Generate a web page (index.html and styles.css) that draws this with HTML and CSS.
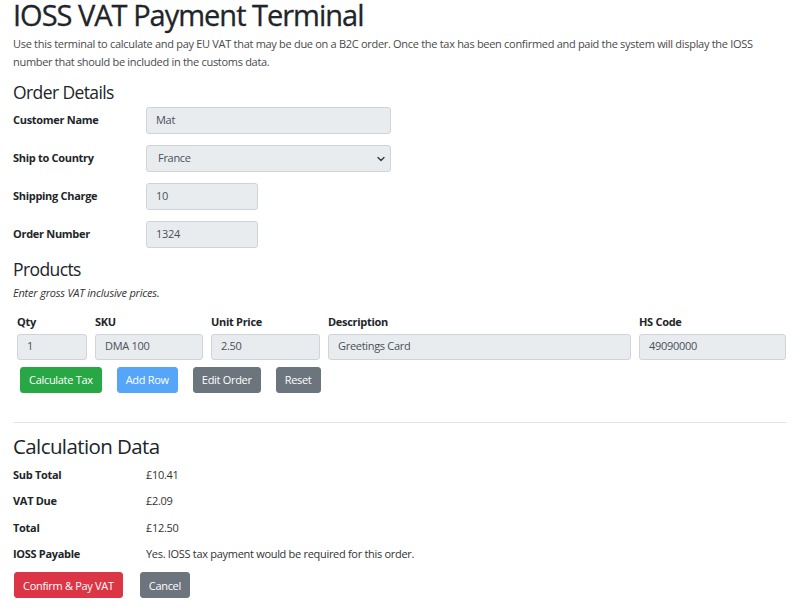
FILE: index.html
```html
<!DOCTYPE html>
<html lang="en">
<head>
<meta charset="utf-8">
<title>IOSS VAT Payment Terminal</title>
<link rel="stylesheet" href="styles.css">
</head>
<body>
<div class="page">
  <h1 class="title">IOSS VAT Payment Terminal</h1>
  <p class="intro">Use this terminal to calculate and pay EU VAT that may be due on a B2C order. Once the tax has been confirmed and paid the system will display the IOSS number that should be included in the customs data.</p>

  <h4 class="section">Order Details</h4>
  <div class="form-row">
    <label class="form-label">Customer Name</label>
    <div class="field field-wide">Mat</div>
  </div>
  <div class="form-row">
    <label class="form-label">Ship to Country</label>
    <div class="field field-wide field-select">France
      <svg class="chevron" viewBox="0 0 8 6" width="8" height="6"><path d="M1 1.5 L4 4.5 L7 1.5" fill="none" stroke="#343a40" stroke-width="1.4" stroke-linecap="round" stroke-linejoin="round"/></svg>
    </div>
  </div>
  <div class="form-row">
    <label class="form-label">Shipping Charge</label>
    <div class="field field-short">10</div>
  </div>
  <div class="form-row">
    <label class="form-label">Order Number</label>
    <div class="field field-short">1324</div>
  </div>

  <h4 class="section section-products">Products</h4>
  <p class="hint">Enter gross VAT inclusive prices.</p>

  <div class="products">
    <div class="th">Qty</div>
    <div class="th">SKU</div>
    <div class="th">Unit Price</div>
    <div class="th">Description</div>
    <div class="th">HS Code</div>
    <div class="td"><div class="field">1</div></div>
    <div class="td"><div class="field">DMA 100</div></div>
    <div class="td"><div class="field">2.50</div></div>
    <div class="td"><div class="field">Greetings Card</div></div>
    <div class="td"><div class="field">49090000</div></div>
  </div>

  <div class="actions actions-products">
    <button class="btn btn-success">Calculate Tax</button>
    <button class="btn btn-primary-disabled">Add Row</button>
    <button class="btn btn-secondary">Edit Order</button>
    <button class="btn btn-secondary">Reset</button>
  </div>

  <hr class="divider">

  <h3 class="section-lg">Calculation Data</h3>
  <div class="calc-row"><span class="calc-label">Sub Total</span><span class="calc-value">£10.41</span></div>
  <div class="calc-row"><span class="calc-label">VAT Due</span><span class="calc-value">£2.09</span></div>
  <div class="calc-row"><span class="calc-label">Total</span><span class="calc-value">£12.50</span></div>
  <div class="calc-row"><span class="calc-label">IOSS Payable</span><span class="calc-value">Yes. IOSS tax payment would be required for this order.</span></div>

  <div class="actions actions-confirm">
    <button class="btn btn-danger">Confirm &amp; Pay VAT</button>
    <button class="btn btn-secondary">Cancel</button>
  </div>
</div>
</body>
</html>
```

FILE: styles.css
```css
* { box-sizing: border-box; }

html, body {
  margin: 0;
  padding: 0;
  background: #ffffff;
}

body {
  font-family: "Open Sans", "Noto Sans", "Liberation Sans", sans-serif;
  font-size: 11px;
  line-height: 1.5;
  color: #212529;
  letter-spacing: -0.3px;
}

.page {
  padding: 0 13px;
}

.title {
  font-size: 29px;
  font-weight: 500;
  line-height: 30px;
  margin: 0;
  padding-top: 0;
  letter-spacing: -1px;
  -webkit-text-stroke: 0.3px #212529;
}

.intro {
  margin: 5px 0 0 0;
  font-size: 11px;
  line-height: 17.5px;
  color: #4a4a4a;
}

.section {
  font-size: 17.5px;
  font-weight: 500;
  line-height: 1.2;
  margin: 12px 0 4px 0;
  letter-spacing: -0.6px;
}

.form-row {
  display: flex;
  align-items: center;
  height: 27px;
  margin-bottom: 11px;
}

.form-label {
  width: 133px;
  font-weight: 700;
  font-size: 11px;
  color: #212529;
}

.field {
  height: 27px;
  background: #e9ecef;
  border: 1px solid #ced4da;
  border-radius: 3px;
  padding: 0 9px;
  display: flex;
  align-items: center;
  font-size: 11px;
  color: #495057;
}

.field-wide { width: 245px; }
.field-short { width: 112px; }

.field-select {
  justify-content: space-between;
  padding-left: 11px;
  padding-right: 5px;
}

.chevron { display: block; }

.section-products {
  margin-top: 10px;
  margin-bottom: 5px;
}

.hint {
  margin: 0;
  font-size: 11px;
  font-style: italic;
  color: #333;
  letter-spacing: -0.2px;
}

.products {
  display: grid;
  grid-template-columns: 78px 116px 117px 311px 155px;
  margin-top: 8px;
}

.th {
  padding: 4px 4px 0 4px;
  font-weight: 700;
  font-size: 11px;
  height: 22px;
  display: flex;
  align-items: center;
}

.td {
  padding: 2px 4px 4px 4px;
}

.td .field {
  width: 100%;
  height: 26px;
}

.actions {
  display: flex;
  gap: 15px;
}

.actions-products {
  padding-left: 7px;
  margin-top: 3px;
}

.btn {
  font-family: inherit;
  font-size: 11px;
  letter-spacing: -0.3px;
  height: 26px;
  padding: 0 8px;
  border: 1px solid transparent;
  border-radius: 3px;
  color: #ffffff;
  line-height: 1;
  cursor: pointer;
}

.btn-success { background: #28a745; border-color: #28a745; }
.btn-primary-disabled { background: #55a6f9; border-color: #55a6f9; }
.btn-secondary { background: #6c757d; border-color: #6c757d; }
.btn-danger { background: #dc3545; border-color: #dc3545; }

.divider {
  border: 0;
  border-top: 1px solid #e6e6e6;
  margin: 29px 0 0 0;
}

.section-lg {
  font-size: 20.5px;
  font-weight: 500;
  line-height: 1.2;
  margin: 11px 0 4px 0;
  letter-spacing: -0.6px;
}

.calc-row {
  display: flex;
  align-items: center;
  height: 26.3px;
}

.calc-label {
  width: 133px;
  font-weight: 700;
  font-size: 11px;
}

.calc-value {
  font-size: 11px;
  color: #333;
}

.actions-confirm {
  padding-left: 1px;
  margin-top: 5px;
  gap: 17px;
}
```
